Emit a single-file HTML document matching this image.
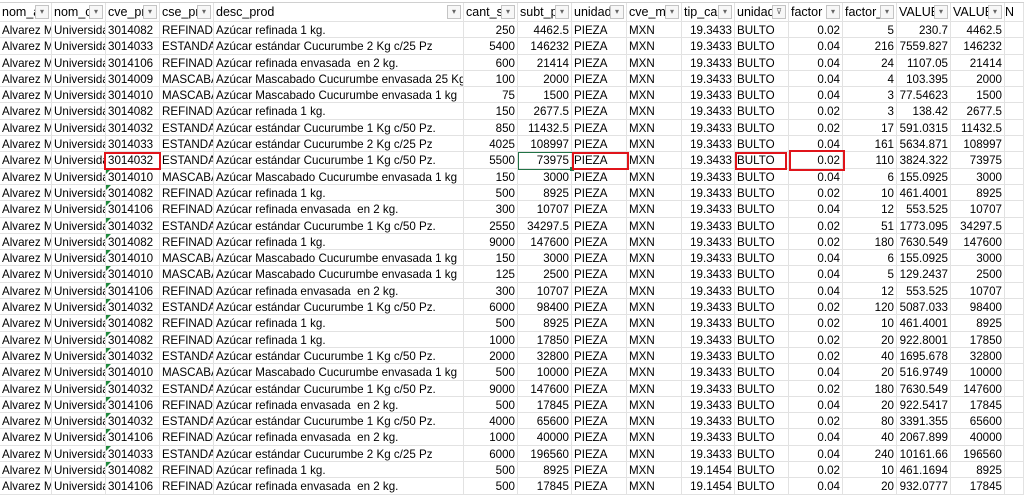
<!DOCTYPE html>
<html><head><meta charset="utf-8">
<style>
*{box-sizing:border-box;margin:0;padding:0}
body{width:1024px;height:493px;overflow:hidden;background:#fff;font-family:"Liberation Sans",sans-serif;font-size:11.6px;color:#000;position:relative}
.h,.r{display:flex;white-space:nowrap}
.h{border-top:1px solid #d0d0d0;margin-top:2px;height:20px}
.r{height:16.3px}
.h>div,.r>div{border-right:1px solid #e2e2e2;border-bottom:1px solid #e2e2e2;overflow:hidden;padding:0 2px;line-height:17px;position:relative}
.h>div{line-height:19px;font-size:12.5px;padding-right:18px}
.h>div i{position:absolute;right:2px;top:2px;width:14px;height:14px;border:1px solid #c4c4c4;background:#f7f7f7;font-style:normal;font-size:8px;color:#666;line-height:12px;text-align:center;padding:0}
.n{text-align:right}
.c1{width:52px}.c2{width:54px}.c3{width:54px}.c4{width:54px}.c5{width:250px}.c6{width:54px}.c7{width:54px}.c8{width:55px}.c9{width:55px}.c10{width:53px}.c11{width:54px}.c12{width:54px}.c13{width:54px}.c14{width:54px}.c15{width:54px}.c16{width:19px}
.t::before{content:"";position:absolute;left:0;top:0;border-top:5px solid #1e8a3c;border-right:5px solid transparent}
.box{position:absolute;border:2px solid #e0141b}
</style></head><body>
<div class="h"><div class="c1">nom_ag<i>▾</i></div><div class="c2">nom_ct<i>▾</i></div><div class="c3">cve_pro<i>▾</i></div><div class="c4">cse_pro<i>▾</i></div><div class="c5">desc_prod<i>▾</i></div><div class="c6">cant_su<i>▾</i></div><div class="c7">subt_pr<i>▾</i></div><div class="c8">unidad<i>▾</i></div><div class="c9">cve_mo<i>▾</i></div><div class="c10">tip_cam<i>▾</i></div><div class="c11">unidad (<i>⊽</i></div><div class="c12">factor<i>▾</i></div><div class="c13">factor_F<i>▾</i></div><div class="c14">VALUE I<i>▾</i></div><div class="c15">VALUE I<i>▾</i></div><div class="c16" style="padding:0">N</div></div>
<div class="r"><div class="c1">Alvarez Me</div><div class="c2">Universida</div><div class="c3">3014082</div><div class="c4">REFINADA</div><div class="c5">Azúcar refinada 1 kg.</div><div class="c6 n">250</div><div class="c7 n">4462.5</div><div class="c8">PIEZA</div><div class="c9">MXN</div><div class="c10 n">19.3433</div><div class="c11">BULTO</div><div class="c12 n">0.02</div><div class="c13 n">5</div><div class="c14 n">230.7</div><div class="c15 n">4462.5</div><div class="c16"></div></div>
<div class="r"><div class="c1">Alvarez Me</div><div class="c2">Universida</div><div class="c3">3014033</div><div class="c4">ESTANDAR</div><div class="c5">Azúcar estándar Cucurumbe 2 Kg c/25 Pz</div><div class="c6 n">5400</div><div class="c7 n">146232</div><div class="c8">PIEZA</div><div class="c9">MXN</div><div class="c10 n">19.3433</div><div class="c11">BULTO</div><div class="c12 n">0.04</div><div class="c13 n">216</div><div class="c14 n">7559.827</div><div class="c15 n">146232</div><div class="c16"></div></div>
<div class="r"><div class="c1">Alvarez Me</div><div class="c2">Universida</div><div class="c3">3014106</div><div class="c4">REFINADA</div><div class="c5">Azúcar refinada envasada&nbsp; en 2 kg.</div><div class="c6 n">600</div><div class="c7 n">21414</div><div class="c8">PIEZA</div><div class="c9">MXN</div><div class="c10 n">19.3433</div><div class="c11">BULTO</div><div class="c12 n">0.04</div><div class="c13 n">24</div><div class="c14 n">1107.05</div><div class="c15 n">21414</div><div class="c16"></div></div>
<div class="r"><div class="c1">Alvarez Me</div><div class="c2">Universida</div><div class="c3">3014009</div><div class="c4">MASCABADO</div><div class="c5">Azúcar Mascabado Cucurumbe envasada 25 Kg</div><div class="c6 n">100</div><div class="c7 n">2000</div><div class="c8">PIEZA</div><div class="c9">MXN</div><div class="c10 n">19.3433</div><div class="c11">BULTO</div><div class="c12 n">0.04</div><div class="c13 n">4</div><div class="c14 n">103.395</div><div class="c15 n">2000</div><div class="c16"></div></div>
<div class="r"><div class="c1">Alvarez Me</div><div class="c2">Universida</div><div class="c3">3014010</div><div class="c4">MASCABADO</div><div class="c5">Azúcar Mascabado Cucurumbe envasada 1 kg</div><div class="c6 n">75</div><div class="c7 n">1500</div><div class="c8">PIEZA</div><div class="c9">MXN</div><div class="c10 n">19.3433</div><div class="c11">BULTO</div><div class="c12 n">0.04</div><div class="c13 n">3</div><div class="c14 n">77.54623</div><div class="c15 n">1500</div><div class="c16"></div></div>
<div class="r"><div class="c1">Alvarez Me</div><div class="c2">Universida</div><div class="c3">3014082</div><div class="c4">REFINADA</div><div class="c5">Azúcar refinada 1 kg.</div><div class="c6 n">150</div><div class="c7 n">2677.5</div><div class="c8">PIEZA</div><div class="c9">MXN</div><div class="c10 n">19.3433</div><div class="c11">BULTO</div><div class="c12 n">0.02</div><div class="c13 n">3</div><div class="c14 n">138.42</div><div class="c15 n">2677.5</div><div class="c16"></div></div>
<div class="r"><div class="c1">Alvarez Me</div><div class="c2">Universida</div><div class="c3">3014032</div><div class="c4">ESTANDAR</div><div class="c5">Azúcar estándar Cucurumbe 1 Kg c/50 Pz.</div><div class="c6 n">850</div><div class="c7 n">11432.5</div><div class="c8">PIEZA</div><div class="c9">MXN</div><div class="c10 n">19.3433</div><div class="c11">BULTO</div><div class="c12 n">0.02</div><div class="c13 n">17</div><div class="c14 n">591.0315</div><div class="c15 n">11432.5</div><div class="c16"></div></div>
<div class="r"><div class="c1">Alvarez Me</div><div class="c2">Universida</div><div class="c3">3014033</div><div class="c4">ESTANDAR</div><div class="c5">Azúcar estándar Cucurumbe 2 Kg c/25 Pz</div><div class="c6 n">4025</div><div class="c7 n">108997</div><div class="c8">PIEZA</div><div class="c9">MXN</div><div class="c10 n">19.3433</div><div class="c11">BULTO</div><div class="c12 n">0.04</div><div class="c13 n">161</div><div class="c14 n">5634.871</div><div class="c15 n">108997</div><div class="c16"></div></div>
<div class="r"><div class="c1">Alvarez Me</div><div class="c2">Universida</div><div class="c3">3014032</div><div class="c4">ESTANDAR</div><div class="c5">Azúcar estándar Cucurumbe 1 Kg c/50 Pz.</div><div class="c6 n">5500</div><div class="c7 n">73975</div><div class="c8">PIEZA</div><div class="c9">MXN</div><div class="c10 n">19.3433</div><div class="c11">BULTO</div><div class="c12 n">0.02</div><div class="c13 n">110</div><div class="c14 n">3824.322</div><div class="c15 n">73975</div><div class="c16"></div></div>
<div class="r"><div class="c1">Alvarez Me</div><div class="c2">Universida</div><div class="c3 t">3014010</div><div class="c4">MASCABADO</div><div class="c5">Azúcar Mascabado Cucurumbe envasada 1 kg</div><div class="c6 n">150</div><div class="c7 n">3000</div><div class="c8">PIEZA</div><div class="c9">MXN</div><div class="c10 n">19.3433</div><div class="c11">BULTO</div><div class="c12 n">0.04</div><div class="c13 n">6</div><div class="c14 n">155.0925</div><div class="c15 n">3000</div><div class="c16"></div></div>
<div class="r"><div class="c1">Alvarez Me</div><div class="c2">Universida</div><div class="c3 t">3014082</div><div class="c4">REFINADA</div><div class="c5">Azúcar refinada 1 kg.</div><div class="c6 n">500</div><div class="c7 n">8925</div><div class="c8">PIEZA</div><div class="c9">MXN</div><div class="c10 n">19.3433</div><div class="c11">BULTO</div><div class="c12 n">0.02</div><div class="c13 n">10</div><div class="c14 n">461.4001</div><div class="c15 n">8925</div><div class="c16"></div></div>
<div class="r"><div class="c1">Alvarez Me</div><div class="c2">Universida</div><div class="c3 t">3014106</div><div class="c4">REFINADA</div><div class="c5">Azúcar refinada envasada&nbsp; en 2 kg.</div><div class="c6 n">300</div><div class="c7 n">10707</div><div class="c8">PIEZA</div><div class="c9">MXN</div><div class="c10 n">19.3433</div><div class="c11">BULTO</div><div class="c12 n">0.04</div><div class="c13 n">12</div><div class="c14 n">553.525</div><div class="c15 n">10707</div><div class="c16"></div></div>
<div class="r"><div class="c1">Alvarez Me</div><div class="c2">Universida</div><div class="c3 t">3014032</div><div class="c4">ESTANDAR</div><div class="c5">Azúcar estándar Cucurumbe 1 Kg c/50 Pz.</div><div class="c6 n">2550</div><div class="c7 n">34297.5</div><div class="c8">PIEZA</div><div class="c9">MXN</div><div class="c10 n">19.3433</div><div class="c11">BULTO</div><div class="c12 n">0.02</div><div class="c13 n">51</div><div class="c14 n">1773.095</div><div class="c15 n">34297.5</div><div class="c16"></div></div>
<div class="r"><div class="c1">Alvarez Me</div><div class="c2">Universida</div><div class="c3 t">3014082</div><div class="c4">REFINADA</div><div class="c5">Azúcar refinada 1 kg.</div><div class="c6 n">9000</div><div class="c7 n">147600</div><div class="c8">PIEZA</div><div class="c9">MXN</div><div class="c10 n">19.3433</div><div class="c11">BULTO</div><div class="c12 n">0.02</div><div class="c13 n">180</div><div class="c14 n">7630.549</div><div class="c15 n">147600</div><div class="c16"></div></div>
<div class="r"><div class="c1">Alvarez Me</div><div class="c2">Universida</div><div class="c3 t">3014010</div><div class="c4">MASCABADO</div><div class="c5">Azúcar Mascabado Cucurumbe envasada 1 kg</div><div class="c6 n">150</div><div class="c7 n">3000</div><div class="c8">PIEZA</div><div class="c9">MXN</div><div class="c10 n">19.3433</div><div class="c11">BULTO</div><div class="c12 n">0.04</div><div class="c13 n">6</div><div class="c14 n">155.0925</div><div class="c15 n">3000</div><div class="c16"></div></div>
<div class="r"><div class="c1">Alvarez Me</div><div class="c2">Universida</div><div class="c3 t">3014010</div><div class="c4">MASCABADO</div><div class="c5">Azúcar Mascabado Cucurumbe envasada 1 kg</div><div class="c6 n">125</div><div class="c7 n">2500</div><div class="c8">PIEZA</div><div class="c9">MXN</div><div class="c10 n">19.3433</div><div class="c11">BULTO</div><div class="c12 n">0.04</div><div class="c13 n">5</div><div class="c14 n">129.2437</div><div class="c15 n">2500</div><div class="c16"></div></div>
<div class="r"><div class="c1">Alvarez Me</div><div class="c2">Universida</div><div class="c3 t">3014106</div><div class="c4">REFINADA</div><div class="c5">Azúcar refinada envasada&nbsp; en 2 kg.</div><div class="c6 n">300</div><div class="c7 n">10707</div><div class="c8">PIEZA</div><div class="c9">MXN</div><div class="c10 n">19.3433</div><div class="c11">BULTO</div><div class="c12 n">0.04</div><div class="c13 n">12</div><div class="c14 n">553.525</div><div class="c15 n">10707</div><div class="c16"></div></div>
<div class="r"><div class="c1">Alvarez Me</div><div class="c2">Universida</div><div class="c3 t">3014032</div><div class="c4">ESTANDAR</div><div class="c5">Azúcar estándar Cucurumbe 1 Kg c/50 Pz.</div><div class="c6 n">6000</div><div class="c7 n">98400</div><div class="c8">PIEZA</div><div class="c9">MXN</div><div class="c10 n">19.3433</div><div class="c11">BULTO</div><div class="c12 n">0.02</div><div class="c13 n">120</div><div class="c14 n">5087.033</div><div class="c15 n">98400</div><div class="c16"></div></div>
<div class="r"><div class="c1">Alvarez Me</div><div class="c2">Universida</div><div class="c3 t">3014082</div><div class="c4">REFINADA</div><div class="c5">Azúcar refinada 1 kg.</div><div class="c6 n">500</div><div class="c7 n">8925</div><div class="c8">PIEZA</div><div class="c9">MXN</div><div class="c10 n">19.3433</div><div class="c11">BULTO</div><div class="c12 n">0.02</div><div class="c13 n">10</div><div class="c14 n">461.4001</div><div class="c15 n">8925</div><div class="c16"></div></div>
<div class="r"><div class="c1">Alvarez Me</div><div class="c2">Universida</div><div class="c3 t">3014082</div><div class="c4">REFINADA</div><div class="c5">Azúcar refinada 1 kg.</div><div class="c6 n">1000</div><div class="c7 n">17850</div><div class="c8">PIEZA</div><div class="c9">MXN</div><div class="c10 n">19.3433</div><div class="c11">BULTO</div><div class="c12 n">0.02</div><div class="c13 n">20</div><div class="c14 n">922.8001</div><div class="c15 n">17850</div><div class="c16"></div></div>
<div class="r"><div class="c1">Alvarez Me</div><div class="c2">Universida</div><div class="c3 t">3014032</div><div class="c4">ESTANDAR</div><div class="c5">Azúcar estándar Cucurumbe 1 Kg c/50 Pz.</div><div class="c6 n">2000</div><div class="c7 n">32800</div><div class="c8">PIEZA</div><div class="c9">MXN</div><div class="c10 n">19.3433</div><div class="c11">BULTO</div><div class="c12 n">0.02</div><div class="c13 n">40</div><div class="c14 n">1695.678</div><div class="c15 n">32800</div><div class="c16"></div></div>
<div class="r"><div class="c1">Alvarez Me</div><div class="c2">Universida</div><div class="c3 t">3014010</div><div class="c4">MASCABADO</div><div class="c5">Azúcar Mascabado Cucurumbe envasada 1 kg</div><div class="c6 n">500</div><div class="c7 n">10000</div><div class="c8">PIEZA</div><div class="c9">MXN</div><div class="c10 n">19.3433</div><div class="c11">BULTO</div><div class="c12 n">0.04</div><div class="c13 n">20</div><div class="c14 n">516.9749</div><div class="c15 n">10000</div><div class="c16"></div></div>
<div class="r"><div class="c1">Alvarez Me</div><div class="c2">Universida</div><div class="c3 t">3014032</div><div class="c4">ESTANDAR</div><div class="c5">Azúcar estándar Cucurumbe 1 Kg c/50 Pz.</div><div class="c6 n">9000</div><div class="c7 n">147600</div><div class="c8">PIEZA</div><div class="c9">MXN</div><div class="c10 n">19.3433</div><div class="c11">BULTO</div><div class="c12 n">0.02</div><div class="c13 n">180</div><div class="c14 n">7630.549</div><div class="c15 n">147600</div><div class="c16"></div></div>
<div class="r"><div class="c1">Alvarez Me</div><div class="c2">Universida</div><div class="c3 t">3014106</div><div class="c4">REFINADA</div><div class="c5">Azúcar refinada envasada&nbsp; en 2 kg.</div><div class="c6 n">500</div><div class="c7 n">17845</div><div class="c8">PIEZA</div><div class="c9">MXN</div><div class="c10 n">19.3433</div><div class="c11">BULTO</div><div class="c12 n">0.04</div><div class="c13 n">20</div><div class="c14 n">922.5417</div><div class="c15 n">17845</div><div class="c16"></div></div>
<div class="r"><div class="c1">Alvarez Me</div><div class="c2">Universida</div><div class="c3 t">3014032</div><div class="c4">ESTANDAR</div><div class="c5">Azúcar estándar Cucurumbe 1 Kg c/50 Pz.</div><div class="c6 n">4000</div><div class="c7 n">65600</div><div class="c8">PIEZA</div><div class="c9">MXN</div><div class="c10 n">19.3433</div><div class="c11">BULTO</div><div class="c12 n">0.02</div><div class="c13 n">80</div><div class="c14 n">3391.355</div><div class="c15 n">65600</div><div class="c16"></div></div>
<div class="r"><div class="c1">Alvarez Me</div><div class="c2">Universida</div><div class="c3 t">3014106</div><div class="c4">REFINADA</div><div class="c5">Azúcar refinada envasada&nbsp; en 2 kg.</div><div class="c6 n">1000</div><div class="c7 n">40000</div><div class="c8">PIEZA</div><div class="c9">MXN</div><div class="c10 n">19.3433</div><div class="c11">BULTO</div><div class="c12 n">0.04</div><div class="c13 n">40</div><div class="c14 n">2067.899</div><div class="c15 n">40000</div><div class="c16"></div></div>
<div class="r"><div class="c1">Alvarez Me</div><div class="c2">Universida</div><div class="c3 t">3014033</div><div class="c4">ESTANDAR</div><div class="c5">Azúcar estándar Cucurumbe 2 Kg c/25 Pz</div><div class="c6 n">6000</div><div class="c7 n">196560</div><div class="c8">PIEZA</div><div class="c9">MXN</div><div class="c10 n">19.3433</div><div class="c11">BULTO</div><div class="c12 n">0.04</div><div class="c13 n">240</div><div class="c14 n">10161.66</div><div class="c15 n">196560</div><div class="c16"></div></div>
<div class="r"><div class="c1">Alvarez Me</div><div class="c2">Universida</div><div class="c3 t">3014082</div><div class="c4">REFINADA</div><div class="c5">Azúcar refinada 1 kg.</div><div class="c6 n">500</div><div class="c7 n">8925</div><div class="c8">PIEZA</div><div class="c9">MXN</div><div class="c10 n">19.1454</div><div class="c11">BULTO</div><div class="c12 n">0.02</div><div class="c13 n">10</div><div class="c14 n">461.1694</div><div class="c15 n">8925</div><div class="c16"></div></div>
<div class="r"><div class="c1">Alvarez Me</div><div class="c2">Universida</div><div class="c3">3014106</div><div class="c4">REFINADA</div><div class="c5">Azúcar refinada envasada&nbsp; en 2 kg.</div><div class="c6 n">500</div><div class="c7 n">17845</div><div class="c8">PIEZA</div><div class="c9">MXN</div><div class="c10 n">19.1454</div><div class="c11">BULTO</div><div class="c12 n">0.04</div><div class="c13 n">20</div><div class="c14 n">932.0777</div><div class="c15 n">17845</div><div class="c16"></div></div>
<div class="box" style="left:104px;top:150px;width:57px;height:18px"></div>
<div style="position:absolute;left:518px;top:150px;width:55px;height:18px;border:1px solid #217346"></div>
<div style="position:absolute;left:570px;top:165px;width:4px;height:4px;background:#217346"></div>
<div class="box" style="left:572px;top:150px;width:57px;height:18px"></div>
<div class="box" style="left:735px;top:150px;width:52px;height:18px"></div>
<div class="box" style="left:789px;top:148px;width:56px;height:21px"></div>
</body></html>
